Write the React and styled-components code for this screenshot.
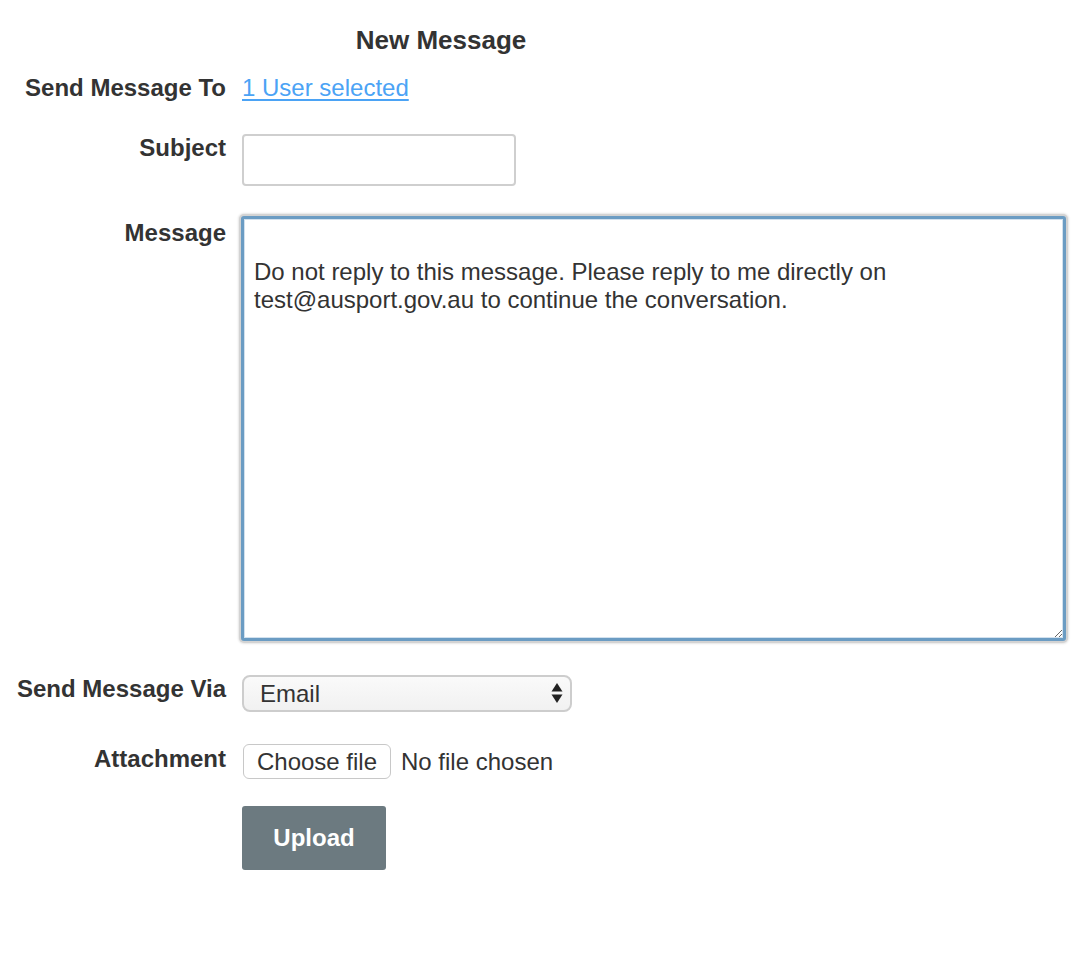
import React, { useState } from 'react';
import styled, { createGlobalStyle } from 'styled-components';

const GlobalStyle = createGlobalStyle`
  html, body {
    margin: 0;
    padding: 0;
    background: #ffffff;
  }
  body {
    font-family: "Liberation Sans", Arial, Helvetica, sans-serif;
    color: #333333;
  }
`;

const Page = styled.div`
  padding: 25px 0 80px;
`;

const Title = styled.h2`
  width: 882px;
  margin: 0 0 19px;
  font-size: 26px;
  line-height: 30px;
  font-weight: 700;
  text-align: center;
`;

const Form = styled.form`
  display: grid;
  grid-template-columns: 226px 1fr;
  column-gap: 16px;
  align-items: start;
`;

const Label = styled.label`
  grid-column: 1;
  margin-top: ${({ $offset }) => $offset || 0}px;
  font-size: 24px;
  line-height: 28px;
  font-weight: 700;
  text-align: right;
  white-space: nowrap;
`;

const Field = styled.div`
  grid-column: 2;
  margin-top: ${({ $gap }) => $gap || 0}px;
  font-size: 24px;
  line-height: 28px;
`;

const LinkText = styled.a`
  color: #4ba3f5;
  text-decoration: underline;
  text-underline-offset: 3px;
  cursor: pointer;
`;

const TextInput = styled.input`
  box-sizing: border-box;
  display: block;
  width: 274px;
  height: 52px;
  margin: 0;
  padding: 4px 10px;
  border: 2px solid #cfcfcf;
  border-radius: 4px;
  font: inherit;
  color: #333;
  outline: none;
`;

const TextArea = styled.textarea`
  box-sizing: border-box;
  display: block;
  width: 825px;
  height: 425px;
  margin: 0 0 0 -1px;
  padding: 11px 10px;
  border: 3px solid #6b9cc3;
  border-radius: 3px;
  box-shadow: inset 0 0 0 1px #d2e1ee, 0 0 0 2px #d3d3d3, 0 0 2px 3px #e6e6e6;
  font-family: inherit;
  font-size: 24px;
  line-height: 28px;
  color: #333;
  outline: none;
  resize: both;
`;

const SelectWrap = styled.div`
  position: relative;
  width: 330px;
`;

const Select = styled.select`
  box-sizing: border-box;
  display: block;
  width: 100%;
  height: 37px;
  margin: 0;
  padding: 0 36px 0 16px;
  border: 2px solid #cdcdcd;
  border-radius: 8px;
  background: linear-gradient(#fafafa, #f1f1f1);
  font: inherit;
  color: #333;
  appearance: none;
  -webkit-appearance: none;
  outline: none;
`;

const Arrows = styled.svg`
  position: absolute;
  right: 9px;
  top: 7px;
  pointer-events: none;
`;

const FileRow = styled.div`
  display: flex;
  align-items: center;
  gap: 10px;
`;

const HiddenFile = styled.input`
  display: none;
`;

const FileButton = styled.label`
  box-sizing: border-box;
  display: inline-flex;
  align-items: center;
  justify-content: center;
  width: 148px;
  height: 35px;
  margin-left: 1px;
  border: 1px solid #c8c8c8;
  border-radius: 6px;
  background: #ffffff;
  font-size: 24px;
  cursor: pointer;
`;

const FileName = styled.span`
  font-size: 24px;
`;

const UploadButton = styled.button`
  width: 144px;
  height: 64px;
  margin: 0;
  border: none;
  border-radius: 3px;
  background: #6c7a80;
  color: #ffffff;
  font-family: inherit;
  font-size: 24px;
  font-weight: 700;
  cursor: pointer;
`;

export default function App() {
  const [message, setMessage] = useState(
    '\nDo not reply to this message. Please reply to me directly on\ntest@ausport.gov.au to continue the conversation.'
  );
  const [via, setVia] = useState('email');
  const [fileName, setFileName] = useState('');

  return (
    <Page>
      <GlobalStyle />
      <Title>New Message</Title>
      <Form onSubmit={(e) => e.preventDefault()}>
        <Label>Send Message To</Label>
        <Field>
          <LinkText>1 User selected</LinkText>
        </Field>

        <Label htmlFor="subject" $offset={32}>Subject</Label>
        <Field $gap={32}>
          <TextInput id="subject" type="text" />
        </Field>

        <Label htmlFor="message" $offset={33}>Message</Label>
        <Field $gap={30}>
          <TextArea
            id="message"
            value={message}
            onChange={(e) => setMessage(e.target.value)}
          />
        </Field>

        <Label htmlFor="via" $offset={34}>Send Message Via</Label>
        <Field $gap={34}>
          <SelectWrap>
            <Select id="via" value={via} onChange={(e) => setVia(e.target.value)}>
              <option value="email">Email</option>
              <option value="sms">SMS</option>
            </Select>
            <Arrows width="12" height="22" viewBox="0 0 12 22">
              <path d="M6 1 L11.5 9.5 L0.5 9.5 Z" fill="#222" />
              <path d="M0.5 12.5 L11.5 12.5 L6 21 Z" fill="#222" />
            </Arrows>
          </SelectWrap>
        </Field>

        <Label $offset={33}>Attachment</Label>
        <Field $gap={32}>
          <FileRow>
            <FileButton>
              Choose file
              <HiddenFile
                type="file"
                onChange={(e) => setFileName(e.target.files[0]?.name || '')}
              />
            </FileButton>
            <FileName>{fileName || 'No file chosen'}</FileName>
          </FileRow>
        </Field>

        <Field $gap={27}>
          <UploadButton type="submit">Upload</UploadButton>
        </Field>
      </Form>
    </Page>
  );
}
